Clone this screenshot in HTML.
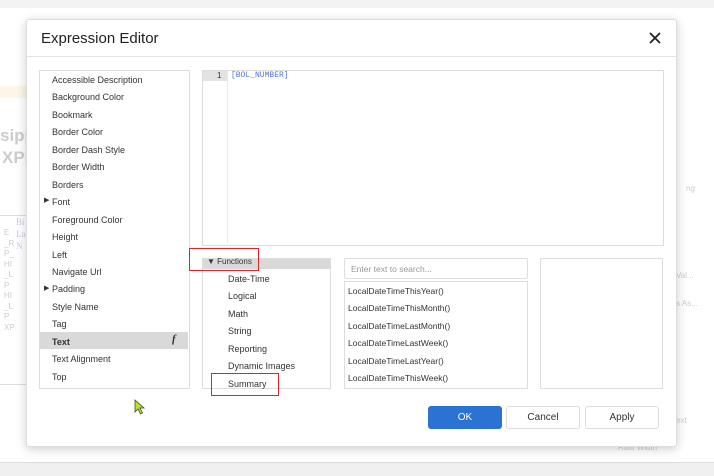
<!DOCTYPE html>
<html><head><style>
body{margin:0;width:714px;height:475px;overflow:hidden;background:#fff;font-family:"Liberation Sans",sans-serif;position:relative}
.abs{position:absolute}
.bg{color:#ddd}
.dlg{left:26px;top:19px;width:649px;height:426px;background:#fff;border:1px solid #ddd;border-radius:3px;box-shadow:0 2px 10px rgba(0,0,0,.2)}
.box{border:1px solid #ddd;background:#fff}
.it{position:absolute;font-size:9px;color:#333;white-space:nowrap}
.btn{position:absolute;top:406px;height:21px;border:1px solid #ddd;border-radius:3px;font-size:10px;text-align:center;line-height:21px;color:#333;background:#fff}
.red{position:absolute;border:1.5px solid #d9262b}
</style></head><body>
<div class="abs" style="left:0;top:0;width:714px;height:8px;background:#f3f3f3"></div>
<div class="abs" style="left:0;top:462px;width:714px;height:13px;background:#f0f0f0;border-top:1px solid #ddd"></div>
<div class="abs" style="left:0;top:86px;width:26px;height:12px;background:#fdf6e6"></div>
<div class="abs bg" style="left:0;top:126px;font-size:17px;font-weight:bold;color:#ccc">sipp</div>
<div class="abs bg" style="left:2px;top:148px;font-size:17px;font-weight:bold;color:#ccc">XPI</div>
<div class="abs" style="left:0;top:215px;width:26px;height:168px;border-top:1px solid #ddd;border-bottom:1px solid #ddd"></div>
<div class="abs" style="left:4px;top:228px;font-size:8px;color:#ccc;line-height:10.5px">E<br>_R<br>P_<br>HI<br>_L<br>P<br>HI<br>_L<br>P<br>XP</div>
<div class="abs" style="left:16px;top:216px;font-size:9px;color:#c8c8e8;line-height:12px;font-family:'Liberation Serif',serif">Bi<br>La<br>N</div>
<div class="abs" style="left:686px;top:184px;font-size:8px;color:#ccc">ng</div>
<div class="abs" style="left:676px;top:271px;font-size:8px;color:#ccc">Val...</div>
<div class="abs" style="left:676px;top:299px;font-size:8px;color:#ccc">s As...</div>
<div class="abs" style="left:676px;top:416px;font-size:8px;color:#ccc">ext</div>
<div class="abs" style="left:618px;top:443px;font-size:8px;color:#ccc">Auto Width</div>

<div class="abs dlg">
<div class="abs" style="left:14px;top:10px;font-size:15px;color:#222">Expression Editor</div>
<svg class="abs" style="left:622px;top:12px" width="12" height="12" viewBox="0 0 12 12"><path d="M1 1L11 11M11 1L1 11" stroke="#222" stroke-width="1.8"/></svg>
<div class="abs" style="left:0;top:36px;width:649px;height:1px;background:#e3e3e3"></div>
</div>

<div class="abs box" style="left:39px;top:70px;width:149px;height:317px"></div>
<div class="abs" style="left:40px;top:332px;width:148px;height:17px;background:#d9d9d9"></div>
<div class="it" style="left:52px;top:72px;line-height:17.45px">Accessible Description<br>Background Color<br>Bookmark<br>Border Color<br>Border Dash Style<br>Border Width<br>Borders<br>Font<br>Foreground Color<br>Height<br>Left<br>Navigate Url<br>Padding<br>Style Name<br>Tag<br><b>Text</b><br>Text Alignment<br>Top</div>
<div class="it" style="left:44px;top:196px;font-size:7px">▶</div>
<div class="it" style="left:44px;top:284px;font-size:7px">▶</div>
<div class="it" style="left:172px;top:333px;font-size:11px;font-style:italic;font-weight:bold;font-family:'Liberation Serif',serif">f</div>

<div class="abs box" style="left:202px;top:70px;width:460px;height:174px"></div>
<div class="abs" style="left:203px;top:71px;width:24px;height:10px;background:#e3e3e3"></div>
<div class="abs" style="left:227px;top:71px;width:1px;height:172px;background:#e8e8e8"></div>
<div class="it" style="left:217px;top:71px;font-size:8px">1</div>
<div class="it" style="left:231px;top:71px;font-size:8px;color:#5577dd;font-family:'Liberation Mono',monospace">[BOL_NUMBER]</div>

<div class="abs box" style="left:202px;top:258px;width:127px;height:129px"></div>
<div class="abs" style="left:203px;top:259px;width:127px;height:10px;background:#d9d9d9"></div>
<div class="it" style="left:207px;top:257px;font-size:8px">▼ Functions</div>
<div class="it" style="left:228px;top:271px;line-height:17.45px">Date-Time<br>Logical<br>Math<br>String<br>Reporting<br>Dynamic Images<br>Summary</div>

<div class="abs box" style="left:344px;top:258px;width:182px;height:19px;border-radius:2px"></div>
<div class="it" style="left:351px;top:264px;color:#999;font-size:8.5px">Enter text to search...</div>
<div class="abs box" style="left:344px;top:281px;width:182px;height:106px"></div>
<div class="it" style="left:348px;top:283px;line-height:17.4px;font-size:8.5px">LocalDateTimeThisYear()<br>LocalDateTimeThisMonth()<br>LocalDateTimeLastMonth()<br>LocalDateTimeLastWeek()<br>LocalDateTimeLastYear()<br>LocalDateTimeThisWeek()</div>
<div class="abs box" style="left:540px;top:258px;width:121px;height:129px"></div>

<div class="btn" style="left:428px;width:72px;background:#2c72d2;border-color:#2c72d2;color:#fff">OK</div>
<div class="btn" style="left:506px;width:72px">Cancel</div>
<div class="btn" style="left:585px;width:72px">Apply</div>

<div class="red" style="left:189px;top:248px;width:68px;height:21px"></div>
<div class="red" style="left:211px;top:373px;width:66px;height:21px"></div>

<svg class="abs" style="left:134px;top:399px" width="12" height="16" viewBox="0 0 12 16"><path d="M1 1 L1 13 L4 10 L6.5 15 L8.5 14 L6 9 L10 9 Z" fill="#b5e61d" stroke="#444" stroke-width="0.8"/></svg>
</body></html>
